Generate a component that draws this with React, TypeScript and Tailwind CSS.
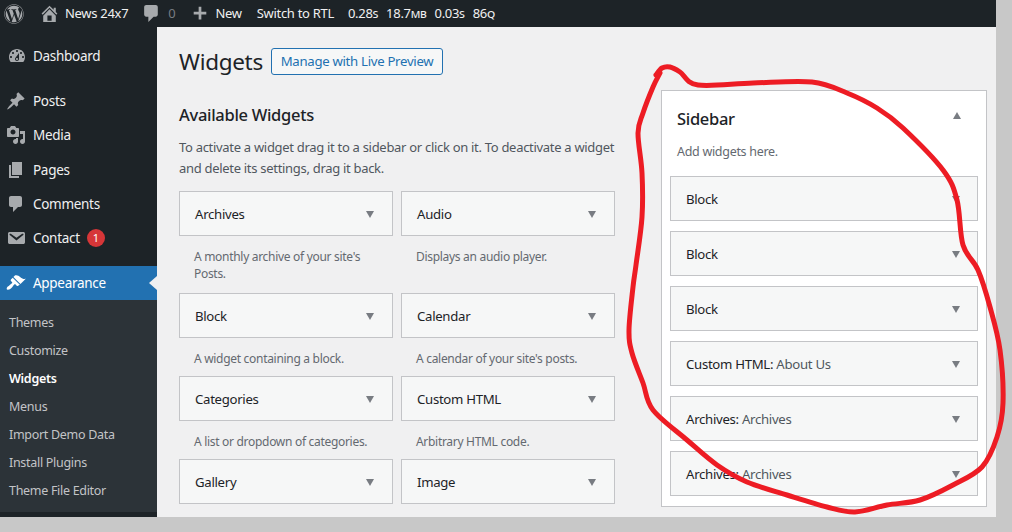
import { FaWordpress } from 'react-icons/fa'

const font = "font-['Noto_Sans','Open_Sans',sans-serif] tracking-[-0.3px]"

const icons = {
  home: "M16 8.5l1.53 1.53-1.06 1.06L10 4.62l-6.47 6.47-1.06-1.06L10 2.5l4 4v-2h2v4zm-6-2.46l6 5.99V18H4v-5.97zM12 17v-5H8v5h4z",
  comment: "M5 2h9c1.1 0 2 .9 2 2v7c0 1.1-.9 2-2 2h-2l-5 5v-5H5c-1.1 0-2-.9-2-2V4c0-1.1.9-2 2-2z",
  plus: "M17 7.5v3h-5.5V16h-3v-5.5H3v-3h5.5V2h3v5.5z",
  dashboard: "M3.76 16h12.48c1.1-1.37 1.76-3.11 1.76-5 0-4.42-3.58-8-8-8s-8 3.58-8 8c0 1.89.66 3.63 1.76 5zM10 4c.55 0 1 .45 1 1s-.45 1-1 1-1-.45-1-1 .45-1 1-1zM6 6c.55 0 1 .45 1 1s-.45 1-1 1-1-.45-1-1 .45-1 1-1zm8 0c.55 0 1 .45 1 1s-.45 1-1 1-1-.45-1-1 .45-1 1-1zm-5.37 5.55L12 7v6c0 1.1-.9 2-2 2s-2-.9-2-2c0-.57.24-1.08.63-1.45zM4 10c.55 0 1 .45 1 1s-.45 1-1 1-1-.45-1-1 .45-1 1-1zm12 0c.55 0 1 .45 1 1s-.45 1-1 1-1-.45-1-1 .45-1 1-1zm-5 3c0-.55-.45-1-1-1s-1 .45-1 1 .45 1 1 1 1-.45 1-1z",
  post: "M10.44 3.02l1.82-1.82 6.36 6.35-1.83 1.82c-1.05-.68-2.48-.57-3.41.36l-.75.75c-.92.93-1.04 2.35-.35 3.41l-1.83 1.82-2.41-2.41-2.8 2.79c-.42.42-3.38 2.71-3.8 2.29s1.86-3.39 2.28-3.81l2.79-2.79L4.1 9.36l1.83-1.82c1.05.69 2.48.57 3.4-.36l.75-.75c.93-.92 1.05-2.35.36-3.41z",
  media: "M13 11V4c0-.55-.45-1-1-1h-1.67L9 1H5L3.67 3H2c-.55 0-1 .45-1 1v7c0 .55.45 1 1 1h10c.55 0 1-.45 1-1zM7 4.5c1.38 0 2.5 1.12 2.5 2.5S8.38 9.5 7 9.5 4.5 8.38 4.5 7 5.62 4.5 7 4.5zM14 6h5v10.5c0 1.38-1.12 2.5-2.5 2.5S14 17.88 14 16.5s1.12-2.5 2.5-2.5c.17 0 .34.02.5.05V9h-3V6zm-4 8.05V13h2v3.5c0 1.38-1.12 2.5-2.5 2.5S7 17.88 7 16.5 8.12 14 9.5 14c.17 0 .34.02.5.05z",
  page: "M6 15V2h10v13H6zm-1 1h8v2H3V5h2v11z",
  email: "M3.87 4h13.25C18.37 4 19 4.59 19 5.79v8.42c0 1.19-.63 1.79-1.88 1.79H3.87c-1.25 0-1.88-.6-1.88-1.79V5.79c0-1.2.63-1.79 1.88-1.79zm6.62 8.6l6.74-5.53c.24-.2.43-.66.13-1.07-.29-.41-.82-.42-1.17-.17l-5.7 3.86L4.8 5.83c-.35-.25-.88-.24-1.17.17-.3.41-.11.87.13 1.07z",
  appearance: "M14.48 11.06L7.41 3.99l1.5-1.5c.5-.56 2.3-.47 3.51.32 1.21.8 1.43 1.28 2.91 2.1 1.18.64 2.45 1.26 4.45.85zm-.71.71L6.7 4.7 4.93 6.47c-.39.39-.39 1.02 0 1.41l1.06 1.06c.39.39.39 1.03 0 1.42-.6.6-1.43 1.11-2.21 1.69-.35.26-.7.53-1.01.84C1.43 13.23.1 15.45 1.1 16.45s3.26-.32 4.59-1.65c.31-.31.58-.66.84-1.01.58-.78 1.09-1.61 1.69-2.21.39-.39 1.03-.39 1.42 0l1.06 1.06c.39.39 1.02.39 1.41 0z",
}

const Dash = ({ d, className }: { d: string; className: string }) => (
  <svg viewBox="0 0 20 20" fill="currentColor" className={className}>
    <path d={d} />
  </svg>
)

const Arrow = ({ up }: { up?: boolean }) => (
  <svg width="8" height="7" viewBox="0 0 8 7" className="shrink-0 text-[#787c82]" fill="currentColor">
    <polygon points={up ? "4,0 8,7 0,7" : "0,0 8,0 4,7"} />
  </svg>
)

const menu = [
  { label: "Posts", icon: icons.post },
  { label: "Media", icon: icons.media },
  { label: "Pages", icon: icons.page },
  { label: "Comments", icon: icons.comment },
]

const submenu = ["Themes", "Customize", "Widgets", "Menus", "Import Demo Data", "Install Plugins", "Theme File Editor"]

const available = [
  ["Archives", "A monthly archive of your site's Posts."],
  ["Audio", "Displays an audio player."],
  ["Block", "A widget containing a block."],
  ["Calendar", "A calendar of your site's posts."],
  ["Categories", "A list or dropdown of categories."],
  ["Custom HTML", "Arbitrary HTML code."],
  ["Gallery", ""],
  ["Image", ""],
]

const sidebarWidgets = [
  ["Block", ""],
  ["Block", ""],
  ["Block", ""],
  ["Custom HTML:", "About Us"],
  ["Archives:", "Archives"],
  ["Archives:", "Archives"],
]

// the hand drawn circle
const circle = [
  [656, 75], [662, 68], [670, 67], [680, 72], [698, 85], [753, 83], [812, 82], [847, 93], [877, 108], [903, 128],
  [943, 170], [957, 200], [963, 245], [978, 270], [990, 307], [1000, 350], [1003, 403], [997, 437], [982, 467],
  [953, 485], [920, 500], [887, 505], [855, 512], [827, 507], [787, 495], [747, 482], [717, 465], [687, 440],
  [653, 410], [643, 383], [632, 353], [629, 330], [633, 287], [636, 265], [642, 217], [642, 173], [638, 133],
  [643, 113], [653, 87], [660, 73],
]

function smooth(pts: number[][]) {
  let d = `M${pts[0][0]} ${pts[0][1]}`
  for (let i = 0; i < pts.length - 1; i++) {
    const p0 = pts[i - 1] || pts[i]
    const p1 = pts[i]
    const p2 = pts[i + 1]
    const p3 = pts[i + 2] || p2
    d += `C${p1[0] + (p2[0] - p0[0]) / 6} ${p1[1] + (p2[1] - p0[1]) / 6} ${p2[0] - (p3[0] - p1[0]) / 6} ${p2[1] - (p3[1] - p1[1]) / 6} ${p2[0]} ${p2[1]}`
  }
  return d
}

const BarText = ({ children, className = "" }: { children: React.ReactNode; className?: string }) => (
  <span className={`text-[13px] text-[#f0f0f1] whitespace-nowrap ${className}`}>{children}</span>
)

function AdminBar() {
  return (
    <div className="h-[27px] shrink-0 bg-[#1d2327] flex items-center">
      <FaWordpress className="ml-[4px] w-[20px] h-[20px] text-[#a7aaad]" />
      <Dash d={icons.home} className="ml-[14.5px] w-[21px] h-[21px] text-[#a7aaad]" />
      <BarText className="ml-[5.5px]">News 24x7</BarText>
      <Dash d={icons.comment} className="ml-[13px] w-[21px] h-[21px] text-[#a7aaad]" />
      <BarText className="ml-[6px] text-[#787c82]!">0</BarText>
      <Dash d={icons.plus} className="ml-[16px] w-[18px] h-[18px] text-[#a7aaad]" />
      <BarText className="ml-[6px]">New</BarText>
      <BarText className="ml-[15px]">Switch to RTL</BarText>
      <div className="ml-[14px] flex gap-[8px] [font-variant:small-caps]">
        <BarText>0.28s</BarText>
        <BarText>18.7mb</BarText>
        <BarText>0.03s</BarText>
        <BarText>86q</BarText>
      </div>
    </div>
  )
}

function SideMenu() {
  return (
    <div className="w-[157px] shrink-0 bg-[#1d2327] flex flex-col pt-[12px]">
      <div className="h-[34px] flex items-center">
        <Dash d={icons.dashboard} className="ml-[7px] w-[20px] h-[20px] text-[#a7aaad]" />
        <span className="ml-[6px] text-[13.5px] text-[#f0f0f1]">Dashboard</span>
      </div>
      <div className="mt-[11px]">
        {menu.map((m) => (
          <div key={m.label} className="h-[34.3px] flex items-center">
            <Dash d={m.icon} className="ml-[6px] w-[20px] h-[20px] text-[#a7aaad]" />
            <span className="ml-[7px] text-[13.5px] text-[#f0f0f1]">{m.label}</span>
          </div>
        ))}
        <div className="h-[34.3px] flex items-center">
          <Dash d={icons.email} className="ml-[6px] w-[20px] h-[20px] text-[#a7aaad]" />
          <span className="ml-[7px] text-[13.5px] text-[#f0f0f1]">Contact</span>
          <span className="ml-[7px] w-[18px] h-[18px] rounded-full bg-[#d63638] text-white text-[11px] flex items-center justify-center">1</span>
        </div>
      </div>
      <div className="relative mt-[10.5px] h-[34px] bg-[#2271b1] flex items-center">
        <Dash d={icons.appearance} className="ml-[6px] w-[20px] h-[20px] text-white" />
        <span className="ml-[7px] text-[13.5px] text-white">Appearance</span>
        <div className="absolute right-0 top-[10px] w-0 h-0 border-y-[7.5px] border-y-transparent border-r-[8px] border-r-[#f0f0f1]" />
      </div>
      <div className="bg-[#2c3338] pt-[9.4px] pb-[7px] mb-[4px]">
        {submenu.map((s) => (
          <div
            key={s}
            className={`h-[28px] pl-[9px] flex items-center text-[12.5px] ${s === "Widgets" ? "text-white font-semibold" : "text-[#c3c4c7]"}`}
          >
            {s}
          </div>
        ))}
      </div>
    </div>
  )
}

const WidgetTitle = ({ title, sub, className }: { title: string; sub?: string; className: string }) => (
  <div className={`h-[45px] pt-[2px] bg-[#f6f7f7] border border-[#c3c4c7] flex items-center justify-between ${className}`}>
    <span className="text-[13.2px] text-[#1d2327] whitespace-nowrap">
      {title}
      {sub ? <span className="text-[#50575e]"> {sub}</span> : null}
    </span>
    <Arrow />
  </div>
)

export default function App() {
  return (
    <div className={`relative w-[1012px] h-[532px] overflow-hidden bg-[#c8c8c8] ${font}`}>
      <div className="w-[996px] h-[517px] flex flex-col">
        <AdminBar />
        <div className="flex flex-1 min-h-0 bg-[#f0f0f1]">
          <SideMenu />
          <div className="flex-1 flex pl-[22px]">
            <div className="w-[436px] shrink-0">
              <div className="pt-[21px] flex items-center">
                <h1 className="w-[92px] text-[22.5px] leading-[27px] text-[#1d2327]">Widgets</h1>
                <a className="w-[172px] h-[27px] flex items-center justify-center border border-[#2271b1] rounded-[3px] bg-[#f6f7f7] text-[13.2px] text-[#2271b1]">
                  Manage with Live Preview
                </a>
              </div>
              <h2 className="mt-[28px] text-[16.5px] leading-[24px] font-medium text-[#1d2327]">Available Widgets</h2>
              <p className="mt-[9.5px] text-[13px] leading-[21px] text-[#50575e]">
                To activate a widget drag it to a sidebar or click on it. To deactivate a widget and delete its settings, drag it back.
              </p>
              <div className="mt-[12.5px] grid grid-cols-2 gap-x-[8px] grid-rows-[102px_83px_83px_58px]">
                {available.map(([name, desc]) => (
                  <div key={name}>
                    <WidgetTitle title={name} className="pl-[15px] pr-[18px]" />
                    {desc ? <p className="mt-[11.5px] px-[15px] text-[12px] leading-[17px] text-[#646970]">{desc}</p> : null}
                  </div>
                ))}
              </div>
            </div>
            <div className="ml-[46px] mt-[63px] w-[326px] h-[417px] bg-white border border-[#c3c4c7] px-[8px]">
              <div className="pt-[16px] pl-[7px] pr-[18px] flex items-center justify-between h-[40px]">
                <h3 className="text-[16.5px] leading-[24px] font-medium text-[#1d2327]">Sidebar</h3>
                <div className="mb-[8px] mr-[-1px]">
                  <Arrow up />
                </div>
              </div>
              <p className="mt-[11.5px] pl-[7px] text-[12.5px] leading-[17px] text-[#646970]">Add widgets here.</p>
              <div className="mt-[16.5px] flex flex-col gap-[10px]">
                {sidebarWidgets.map(([name, sub], i) => (
                  <WidgetTitle key={i} title={name} sub={sub} className="pl-[15px] pr-[17px]" />
                ))}
              </div>
            </div>
          </div>
        </div>
      </div>
      <svg className="absolute inset-0 pointer-events-none" width="1012" height="532" viewBox="0 0 1012 532" fill="none">
        <path d={smooth(circle)} stroke="#ed1c24" strokeWidth="5" strokeLinecap="round" strokeLinejoin="round" />
      </svg>
    </div>
  )
}
